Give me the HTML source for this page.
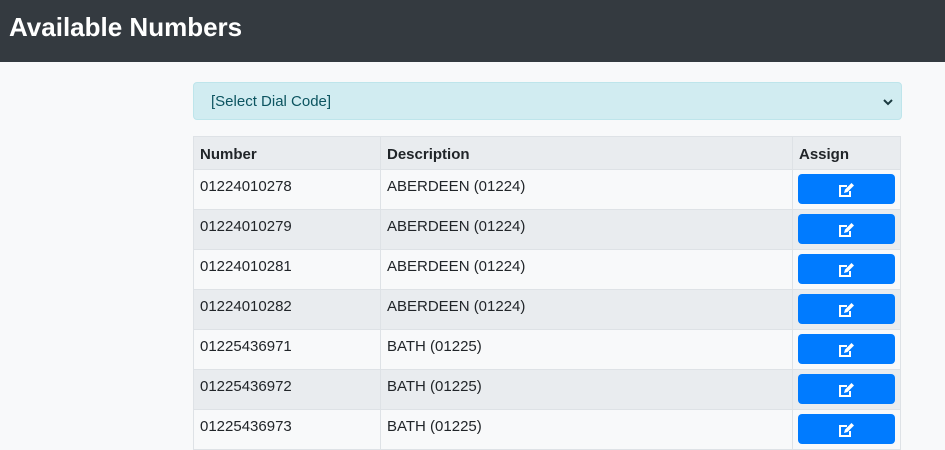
<!DOCTYPE html>
<html><head><style>
*{box-sizing:border-box;margin:0;padding:0}
body{width:945px;height:429px;overflow:hidden;background:#f8f9fa;font-family:"Liberation Sans",sans-serif;color:#212529}
.hd{height:62px;background:#343a40;color:#fff;font-weight:bold;font-size:26px;padding:12px 0 0 9px}
.sel{position:absolute;left:193px;top:82px;width:709px;height:38px;background:#d1ecf1;border:1px solid #bee5eb;border-radius:4px;color:#0c5460;font-size:15px;padding:10px 0 0 17px}
.sel svg{position:absolute;right:8px;top:15px}
table{position:absolute;left:193px;top:136px;width:708px;border-collapse:collapse;font-size:15px}
td,th{border:1px solid #dee2e6;text-align:left;padding:0 6px;height:40px;vertical-align:top;padding-top:8px}
th{height:33px;padding-top:9px;background:#e9ecef;font-weight:bold}
tr:nth-child(odd) td{background:#e9ecef}
tr:nth-child(even) td{background:#f8f9fa}
td.b{padding:4px 5px 0 5px}
.btn{width:97px;height:30px;background:#007bff;border-radius:4px;display:flex;align-items:center;justify-content:center}
</style></head><body>
<div class="hd">Available Numbers</div>
<div class="sel">[Select Dial Code]<svg width="10" height="8" viewBox="0 0 10 8"><path d="M1 2l4 4 4-4" stroke="#1b3a40" stroke-width="2" fill="none"/></svg></div>
<table>
<tr><th style="width:187px">Number</th><th style="width:412px">Description</th><th>Assign</th></tr>
<tr><td>01224010278</td><td>ABERDEEN (01224)</td><td class="b"><div class="btn"><svg width="17" height="15" viewBox="0 0 17 15"><path d="M2 3h7v2H3v8h8V9h2v6H1V3z" fill="#fff"/><path d="M6 11l1-3.5 6.5-6.5 2.5 2.5-6.5 6.5z" fill="#fff"/></svg></div></td></tr>
<tr><td>01224010279</td><td>ABERDEEN (01224)</td><td class="b"><div class="btn"><svg width="17" height="15" viewBox="0 0 17 15"><path d="M2 3h7v2H3v8h8V9h2v6H1V3z" fill="#fff"/><path d="M6 11l1-3.5 6.5-6.5 2.5 2.5-6.5 6.5z" fill="#fff"/></svg></div></td></tr>
<tr><td>01224010281</td><td>ABERDEEN (01224)</td><td class="b"><div class="btn"><svg width="17" height="15" viewBox="0 0 17 15"><path d="M2 3h7v2H3v8h8V9h2v6H1V3z" fill="#fff"/><path d="M6 11l1-3.5 6.5-6.5 2.5 2.5-6.5 6.5z" fill="#fff"/></svg></div></td></tr>
<tr><td>01224010282</td><td>ABERDEEN (01224)</td><td class="b"><div class="btn"><svg width="17" height="15" viewBox="0 0 17 15"><path d="M2 3h7v2H3v8h8V9h2v6H1V3z" fill="#fff"/><path d="M6 11l1-3.5 6.5-6.5 2.5 2.5-6.5 6.5z" fill="#fff"/></svg></div></td></tr>
<tr><td>01225436971</td><td>BATH (01225)</td><td class="b"><div class="btn"><svg width="17" height="15" viewBox="0 0 17 15"><path d="M2 3h7v2H3v8h8V9h2v6H1V3z" fill="#fff"/><path d="M6 11l1-3.5 6.5-6.5 2.5 2.5-6.5 6.5z" fill="#fff"/></svg></div></td></tr>
<tr><td>01225436972</td><td>BATH (01225)</td><td class="b"><div class="btn"><svg width="17" height="15" viewBox="0 0 17 15"><path d="M2 3h7v2H3v8h8V9h2v6H1V3z" fill="#fff"/><path d="M6 11l1-3.5 6.5-6.5 2.5 2.5-6.5 6.5z" fill="#fff"/></svg></div></td></tr>
<tr><td>01225436973</td><td>BATH (01225)</td><td class="b"><div class="btn"><svg width="17" height="15" viewBox="0 0 17 15"><path d="M2 3h7v2H3v8h8V9h2v6H1V3z" fill="#fff"/><path d="M6 11l1-3.5 6.5-6.5 2.5 2.5-6.5 6.5z" fill="#fff"/></svg></div></td></tr>
</table>
</body></html>
